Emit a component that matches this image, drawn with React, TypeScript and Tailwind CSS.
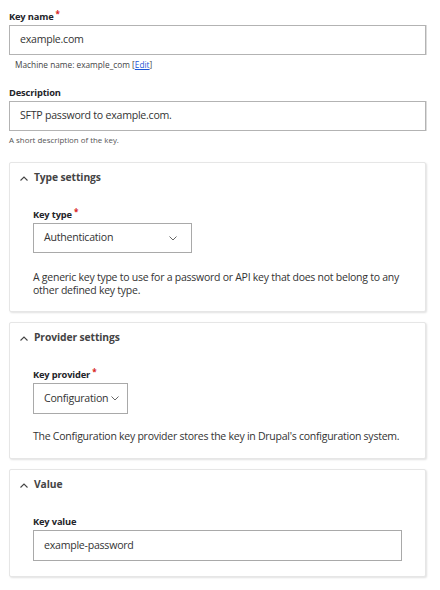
import React from "react";

const font = { fontFamily: '"Open Sans", "Noto Sans", sans-serif' };

function Req() {
  return <span className="text-[#d72222] ml-[2px] text-[8px] relative top-[-3px] font-bold">*</span>;
}

function Chevron() {
  return (
    <svg width="8" height="5" viewBox="0 0 8 5">
      <path d="M0.5 0.5l3.5 3.5L7.5 0.5" fill="none" stroke="#666" strokeWidth="1" />
    </svg>
  );
}

function Section({ title, children, pb }: { title: string; children: React.ReactNode; pb: string }) {
  return (
    <div className="border border-[#e6e6e6] rounded-[2px] shadow-[1px_1px_2px_rgba(0,0,0,0.12)] bg-white">
      <div className="h-[30px] flex items-center pl-[10px] gap-[6px]">
        <svg width="8" height="5" viewBox="0 0 8 5">
          <path d="M0.5 4.5l3.5-3.5L7.5 4.5" fill="none" stroke="#444" strokeWidth="1.1" />
        </svg>
        <span className="text-[10.3px] tracking-[-0.1px] font-bold text-[#444]">{title}</span>
      </div>
      <div className={`px-[23px] pt-[14px] ${pb}`}>{children}</div>
    </div>
  );
}

export default function App() {
  return (
    <div style={font} className="w-[440px] h-[590px] bg-white text-[#232429] overflow-hidden">
      <div className="w-[417px] ml-[9px] pt-[8px]">
        <div className="h-[17px] flex items-center text-[9.3px] tracking-[-0.15px] font-bold">
          Key name<Req />
        </div>
        <div className="h-[30px] border border-[#b3b3b3] shadow-[1px_0_0_#dcdcdc] flex items-center pl-[10px] text-[10.6px] tracking-[-0.25px] text-[#333]">
          example.com
        </div>
        <div className="h-[20px] flex items-center pl-[6px] text-[8.3px] text-[#444]">
          Machine name: example_com&nbsp;<span>[<span className="text-[#1a55d6] underline">Edit</span>]</span>
        </div>
        <div className="h-[16px] mt-[10px] flex items-center text-[9.3px] tracking-[-0.15px] font-bold">Description</div>
        <div className="h-[30px] border border-[#b3b3b3] shadow-[1px_0_0_#dcdcdc] flex items-center pl-[10px] text-[10.6px] tracking-[-0.25px] text-[#333]">
          SFTP password to example.com.
        </div>
        <div className="h-[20px] flex items-center text-[7.9px] text-[#555]">A short description of the key.</div>

        <div className="mt-[11px] flex flex-col gap-[10px]">
          <Section title="Type settings" pb="pb-[14px]">
            <div className="h-[16px] flex items-center text-[9.3px] tracking-[-0.15px] font-bold">
              Key type<Req />
            </div>
            <div className="w-[159px] h-[30px] border border-[#a9a9a9] flex items-center justify-between pl-[10px] pr-[14px] text-[10.6px] tracking-[-0.25px] text-[#333]">
              <span>Authentication</span>
              <Chevron />
            </div>
            <div className="mt-[18px] mr-[-10px] text-[10.5px] tracking-[-0.25px] leading-[13px] text-[#333]">
              A generic key type to use for a password or API key that does not belong to any other defined key type.
            </div>
          </Section>
          <Section title="Provider settings" pb="pb-[15px]">
            <div className="h-[16px] flex items-center text-[9.3px] tracking-[-0.15px] font-bold">
              Key provider<Req />
            </div>
            <div className="w-[95px] h-[31px] border border-[#a9a9a9] flex items-center pl-[10px] gap-[3px] text-[10.6px] tracking-[-0.25px] text-[#333]">
              <span>Configuration</span>
              <Chevron />
            </div>
            <div className="mt-[16px] mr-[-10px] text-[10.5px] tracking-[-0.25px] leading-[13px] text-[#333]">
              The Configuration key provider stores the key in Drupal's configuration system.
            </div>
          </Section>
          <Section title="Value" pb="pb-[15px]">
            <div className="h-[16px] flex items-center text-[9.3px] tracking-[-0.15px] font-bold">Key value</div>
            <div className="h-[31px] border border-[#a9a9a9] flex items-center pl-[10px] text-[10.6px] tracking-[-0.25px] text-[#333]">
              example-password
            </div>
          </Section>
        </div>
      </div>
    </div>
  );
}
